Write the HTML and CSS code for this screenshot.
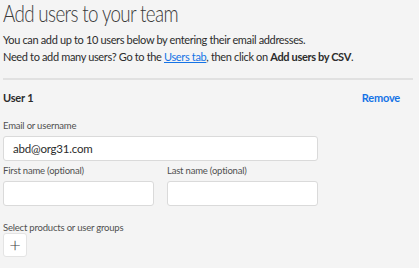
FILE: index.html
```html
<!DOCTYPE html>
<html>
<head>
<meta charset="utf-8">
<link rel="stylesheet" href="styles.css">
</head>
<body>
<div class="page">
  <h1 class="title">Add users to your team</h1>
  <p class="intro">You can add up to 10 users below by entering their email addresses.<br>Need to add many users? Go to the <a class="link" href="#">Users tab</a>, then click on <b>Add users by CSV</b>.</p>
  <div class="divider"></div>
  <div class="user-head">
    <span class="user-title">User 1</span>
    <a class="remove" href="#">Remove</a>
  </div>
  <div class="field email">
    <label class="label">Email or username</label>
    <div class="input wide">abd@org31.com</div>
  </div>
  <div class="row">
    <div class="field">
      <label class="label">First name (optional)</label>
      <div class="input half"></div>
    </div>
    <div class="field">
      <label class="label">Last name (optional)</label>
      <div class="input half"></div>
    </div>
  </div>
  <div class="field products">
    <label class="label">Select products or user groups</label>
    <div class="plus">+</div>
  </div>
</div>
</body>
</html>
```
FILE: styles.css
```css
html, body { margin: 0; padding: 0; background: #f4f4f4; }
body { font-family: Lato, "Open Sans", sans-serif; color: #2c2c2c; width: 419px; height: 268px; overflow: hidden; }
.page { padding: 0 3px; }
.title { display: inline-block; font-weight: 300; font-size: 23.5px; margin: 0; line-height: 26px; color: #3a3a3a; letter-spacing: -0.8px; transform: scaleX(0.8); transform-origin: left center; white-space: nowrap; }
.intro { font-size: 11px; line-height: 17px; margin: 5px 0 0; color: #2c2c2c; letter-spacing: -0.35px; }
.link { color: #1473e6; text-decoration: underline; }
.intro b { font-weight: 700; }
.divider { height: 2px; background: #e1e1e1; margin: 13px 3px 0 0; }
.user-head { display: flex; justify-content: space-between; align-items: center; margin-top: 10px; height: 15px; padding-right: 16px; }
.user-title { font-size: 11px; font-weight: 700; color: #2c2c2c; letter-spacing: -0.2px; }
.remove { font-size: 11px; font-weight: 700; color: #1473e6; text-decoration: none; letter-spacing: -0.2px; }
.field { display: flex; flex-direction: column; }
.label { font-size: 9.5px; color: #505050; line-height: 12px; margin-bottom: 4px; letter-spacing: -0.2px; }
.email { margin-top: 15px; }
.input { background: #fff; border: 1px solid #dadada; border-radius: 3px; box-sizing: border-box; height: 25px; font-size: 11.5px; line-height: 23px; padding: 0 9px; color: #2c2c2c; letter-spacing: -0.2px; }
.wide { width: 315px; }
.row { display: flex; gap: 13px; margin-top: 4px; }
.half { width: 151px; }
.products { margin-top: 16px; }
.products .label { margin-bottom: 0; line-height: 11px; }
.plus { width: 24px; height: 24px; background: #fff; border: 1px solid #e4e4e4; border-radius: 3px; box-sizing: border-box; font-size: 20px; line-height: 21px; text-align: center; color: #444; font-weight: 300; }
```
